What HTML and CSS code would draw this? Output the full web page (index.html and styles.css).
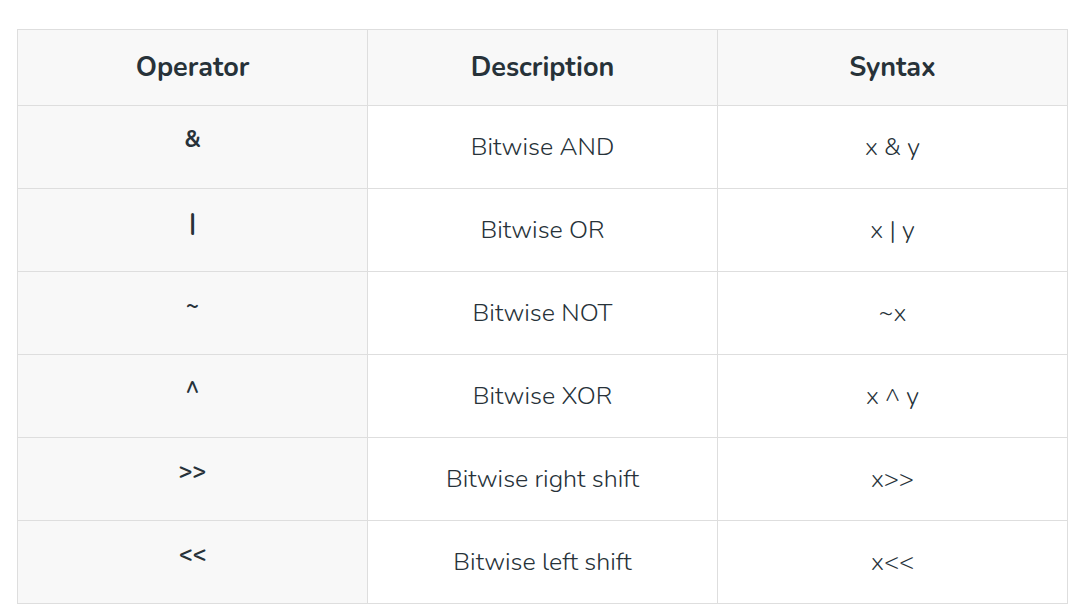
FILE: index.html
```html
<!DOCTYPE html>
<html>
<head>
<meta charset="utf-8">
<link rel="stylesheet" href="styles.css">
</head>
<body>
<table class="ops">
  <colgroup><col class="c"><col class="c"><col class="c"></colgroup>
  <thead>
    <tr><th>Operator</th><th>Description</th><th>Syntax</th></tr>
  </thead>
  <tbody>
    <tr><td class="op"><span>&amp;</span></td><td>Bitwise AND</td><td>x &amp; y</td></tr>
    <tr><td class="op"><span>|</span></td><td>Bitwise OR</td><td>x | y</td></tr>
    <tr><td class="op"><span>~</span></td><td>Bitwise NOT</td><td>~x</td></tr>
    <tr><td class="op"><span>^</span></td><td>Bitwise XOR</td><td>x ^ y</td></tr>
    <tr><td class="op"><span>&gt;&gt;</span></td><td>Bitwise right shift</td><td>x&gt;&gt;</td></tr>
    <tr><td class="op"><span>&lt;&lt;</span></td><td>Bitwise left shift</td><td>x&lt;&lt;</td></tr>
  </tbody>
</table>
</body>
</html>
```

FILE: styles.css
```css
html, body {
  margin: 0;
  padding: 0;
  background: #ffffff;
}
body {
  padding: 29px 0 0 17px;
  font-family: "Nunito", "Lato", "Open Sans", sans-serif;
  color: #273239;
}
.ops {
  border-collapse: collapse;
  table-layout: fixed;
  width: 1051px;
}
.ops .c {
  width: 350px;
}
.ops th, .ops td {
  border: 1px solid #dedede;
  text-align: center;
  padding: 0;
}
.ops th {
  height: 75px;
  background: #f8f8f8;
  font-size: 27px;
  font-weight: 700;
}
.ops td {
  height: 82px;
  font-size: 25px;
  font-weight: 300;
}
.ops td.op {
  background: #f8f8f8;
  font-size: 23px;
  font-weight: 700;
  vertical-align: top;
}
.ops td.op span {
  display: block;
  padding-top: 18px;
}
```
